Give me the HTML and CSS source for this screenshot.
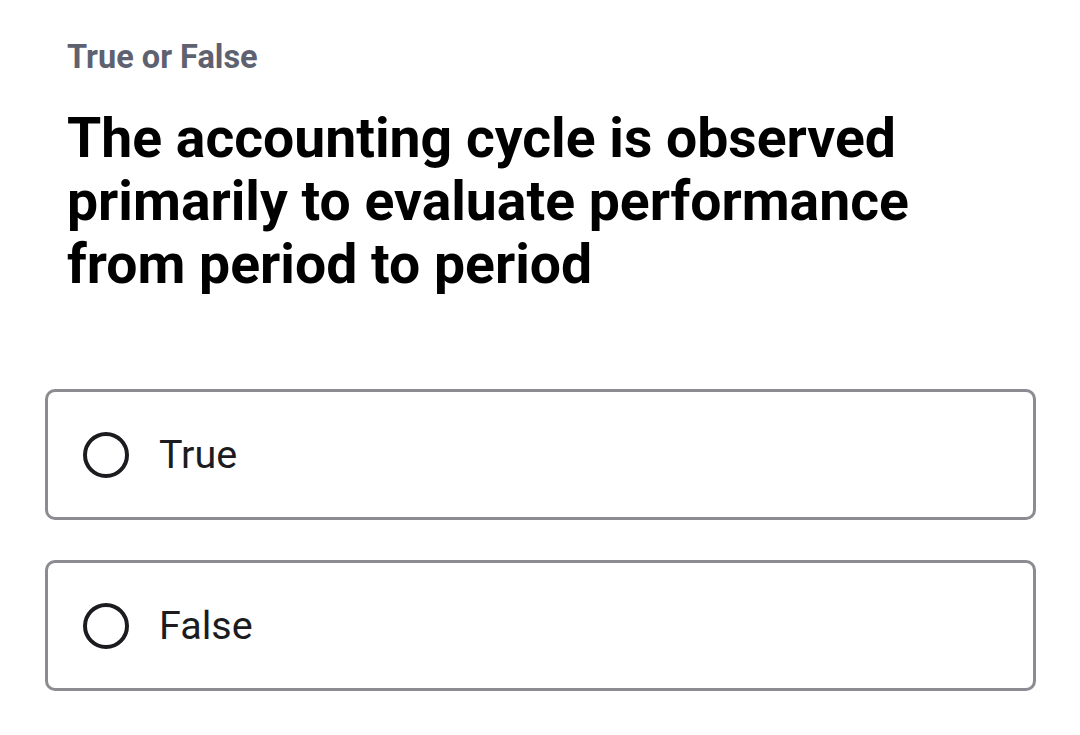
FILE: index.html
```html
<!DOCTYPE html>
<html lang="en">
<head>
  <meta charset="UTF-8">
  <meta name="viewport" content="width=device-width, initial-scale=1.0">
  <title>True or False</title>
  <link rel="stylesheet" href="styles.css">
</head>
<body>

<div class="question">
  <div class="kind">True or False</div>
  <h1 class="prompt">The accounting cycle is observed primarily to evaluate performance from period to period</h1>
  <div class="choices">
    <label class="choice">
      <span class="radio"></span>
      <span class="answer">True</span>
    </label>
    <label class="choice">
      <span class="radio"></span>
      <span class="answer">False</span>
    </label>
  </div>
</div>

</body>
</html>
```

FILE: styles.css
```css
html, body {
  margin: 0;
  background: #fff;
  font-family: Roboto, "Liberation Sans", sans-serif;
}
.question {
  padding: 37px 44px 0 45px;
}
.kind {
  padding-left: 22px;
  font-size: 32.5px;
  font-weight: 700;
  color: #5e6170;
  line-height: 40px;
}
.prompt {
  margin: 30px 0 0;
  padding-left: 22px;
  font-size: 55.3px;
  font-weight: 700;
  line-height: 63px;
  color: #000;
}
.choices {
  margin-top: 93px;
  display: flex;
  flex-direction: column;
  gap: 40px;
}
.choice {
  display: flex;
  align-items: center;
  height: 125px;
  padding-left: 35px;
  border: 3px solid #8b8b91;
  border-radius: 10px;
  cursor: pointer;
}
.radio {
  width: 38px;
  height: 38px;
  border: 4px solid #1c1c20;
  border-radius: 50%;
}
.answer {
  margin-left: 30px;
  font-size: 39.5px;
  color: #1c1c20;
}
```
